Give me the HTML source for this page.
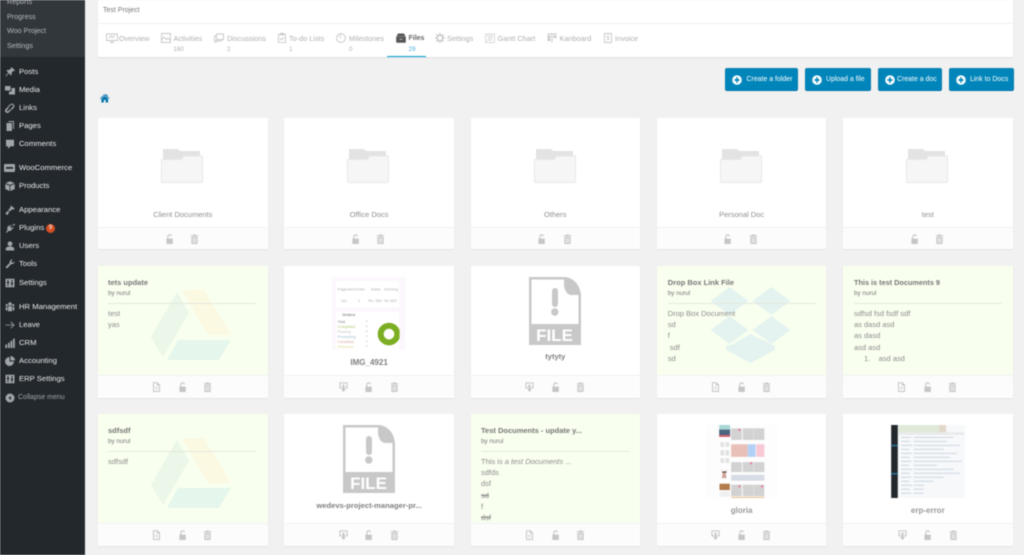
<!DOCTYPE html>
<html><head><meta charset="utf-8"><title>Test Project - Files</title>
<style>
html,body{margin:0;padding:0;background:#f1f1f1;}
body{width:1024px;height:555px;overflow:hidden;position:relative;font-family:"Liberation Sans",sans-serif;}
#w{position:absolute;left:0;top:0;width:1024px;height:555px;overflow:hidden;filter:blur(.4px);}
.t{position:absolute;line-height:12px;white-space:nowrap;}
#side{position:absolute;left:0;top:0;width:85px;height:555px;background:#23282d;}
#sub{position:absolute;left:0;top:0;width:85px;height:57px;background:#32373c;}
#side .m{font-size:7.7px;color:#e8e8e8;left:19px;}
#side .s{font-size:7.200px;color:#b4b9be;left:7px;}
#side svg{position:absolute;left:5px;width:10px;height:10px;fill:#a0a5aa;}
#head{position:absolute;left:98px;top:0;width:915px;height:57px;background:#fff;box-shadow:0 1px 1px rgba(0,0,0,.08);}
#head .l{position:absolute;left:0;top:23px;width:915px;height:1px;background:#f0f0f0;}
.tab{font-size:7.300px;color:#b0b0b0;top:32.500px;}
.cnt{font-size:6.200px;color:#b0b0b0;top:43.500px;}
.ti{position:absolute;top:33px;width:10px;height:10px;fill:none;stroke:#c6c6c6;stroke-width:.9;}
.b{position:absolute;top:68px;height:21px;background:#0085ba;border:1px solid #0a7fb0;border-bottom-color:#0073aa;border-radius:2px;color:#fff;font-size:6.950px;line-height:21px;white-space:nowrap;box-sizing:content-box;}
.b svg{position:absolute;left:6px;top:5.500px;width:10px;height:10px;}
.b span{position:absolute;top:0;}
.c{position:absolute;width:169.600px;height:131.700px;background:#fff;box-shadow:0 1px 1px rgba(0,0,0,.06);overflow:hidden;}
.d{background:#f9ffef;}
.f{position:absolute;left:0;bottom:0;width:100%;height:22.400px;background:#fcfcfc;border-top:1px solid #f2f2f2;box-sizing:border-box;}
.i{position:absolute;top:116px;width:9px;height:10px;fill:#c6c6c6;}
.n{position:absolute;left:0;width:100%;text-align:center;line-height:12px;white-space:nowrap;font-size:7.500px;color:#8f8f8f;}
.nb{font-weight:bold;color:#808080;}
.h{font-size:7.500px;font-weight:bold;color:#777;top:11px;}
.by{font-size:6.300px;color:#777;top:22px;}
.r{position:absolute;top:37px;height:1px;background:#e4e8de;width:148px;}
.p{font-size:7.500px;color:#8c8c8c;}
.bg{position:absolute;left:0;top:0;width:170px;height:110px;}
</style></head><body>
<svg width="0" height="0" style="position:absolute">
<defs>
<symbol id="lock" viewBox="0 0 9 10"><path d="M1.400 4.600h6.400V10H1.400zM2.300 4.600V2.800C2.300 1.200 3.300.3 4.600.3 5.800.3 6.700 1 6.900 2.300L5.800 2.500C5.700 1.800 5.300 1.400 4.600 1.400 3.900 1.400 3.400 1.900 3.400 2.800V4.600z"/></symbol>
<symbol id="trash" viewBox="0 0 9 10"><path d="M.8 1.300h2.400V.4h2.600v.9h2.400v1.100H.8zM1.400 3h6.200v7H1.400zM2.800 4v5h.7V4zM4.200 4v5h.7V4zM5.600 4v5h.7V4z" fill-rule="evenodd"/></symbol>
<symbol id="doc" viewBox="0 0 9 10"><path d="M1 .2h4.500L8 2.800V10H1zM2 1.200V9h5V3.500H4.800V1.200zM3 5h3v.7H3zM3 6.700h3v.7H3z" fill-rule="evenodd"/></symbol>
<symbol id="dl" viewBox="0 0 9 10"><path d="M.4.400h8.200v6H6.400V5H7.600V1.400H1.400V5h1.200v1.400H.4zM3.400 2.800h2.200V7h1.300L4.500 10 2.100 7h1.300z" fill-rule="evenodd"/></symbol>
<symbol id="plus" viewBox="0 0 10 10"><circle cx="5" cy="5" r="4.800" fill="#fff"/><path d="M4.200 2.300h1.600v1.900h1.900v1.600H5.800v1.900H4.200V5.800H2.300V4.200h1.900z" fill="#0085ba"/></symbol>
<symbol id="file" viewBox="0 0 52 68"><path fill="#c8c8c8" fill-rule="evenodd" d="M0 0H36C45 1 51 8 52 18V68H0zM2.500 2.500V47H49.500V18H43C38 18 36 14 35 9V2.500z"/><rect x="23" y="11" width="6" height="19" rx="3" fill="#c8c8c8"/><circle cx="25.800" cy="35" r="3.700" fill="#c8c8c8"/><text x="25.500" y="64" text-anchor="middle" font-family="Liberation Sans" font-weight="bold" font-size="17" fill="#fff">FILE</text></symbol>
<symbol id="folder" viewBox="0 0 42 34"><path d="M2 0h15l2 2h20v10H2z" fill="#e3e3e3"/><path d="M.5 10.500H20l2.500-3.500H41a.5.500 0 0 1 .5.500v25a1 1 0 0 1-1 1H1.500a1 1 0 0 1-1-1z" fill="#f6f6f6" stroke="#e8e8e8"/></symbol>
</defs>
</svg>
<div id="w">

<div id="side"><div id="sub"></div>
<div class="t s" style="top:-4px">Reports</div>
<div class="t s" style="top:11px">Progress</div>
<div class="t s" style="top:25px">Woo Project</div>
<div class="t s" style="top:39.500px">Settings</div>
<svg viewBox="0 0 10 10" style="top:66.500px"><path d="M6.500 0l3.500 3.500-1 .7-.8-.3L6.500 6l.3 1.600-.8.8-2-2.200L1 9.500l-.6-.2L3.300 5.500 1.500 3.700l.8-.9 1.600.4L6 1.300z"/></svg>
<div class="t m" style="top:65.500px">Posts</div>
<svg viewBox="0 0 10 10" style="top:84.500px"><path d="M0 1h5.500v4.500H0zM6.500 3H10v6.500H4V6.500h2.500z"/></svg>
<div class="t m" style="top:83.500px">Media</div>
<svg viewBox="0 0 10 10" style="top:102.500px"><path d="M6.500.5a3 3 0 0 1 3 3L7 7 5.800 5.800 8 3.500a1.400 1.400 0 0 0-1.900-1.700L3.800 4 3 3zM3 3.700L4 4.800 1.800 7.200a1 1 0 0 0 1.200 1.200l2.200-2.300 1 1L3.500 9.800A2.500 2.500 0 0 1 .2 6.500z"/></svg>
<div class="t m" style="top:101.500px">Links</div>
<svg viewBox="0 0 10 10" style="top:121px"><path d="M3.500 0H9v8H8V1H3.500zM1.500 2H7v8H1.500z"/></svg>
<div class="t m" style="top:120px">Pages</div>
<svg viewBox="0 0 10 10" style="top:139px"><path d="M1 .8h8v6.400H5.500L3 9.800V7.200H1z"/></svg>
<div class="t m" style="top:138px">Comments</div>
<svg viewBox="0 0 11 10" style="top:163px;width:11px;left:4px"><rect y="1" width="11" height="8" rx="1"/><path d="M2 4h7v1.800H2z" fill="#23282d"/></svg>
<div class="t m" style="top:162px">WooCommerce</div>
<svg viewBox="0 0 10 10" style="top:181px"><path d="M5 .3l4.500 1.800L5 3.900.5 2.100zM.3 3l4.300 1.700V10L.3 8zM9.700 3L5.400 4.700V10l4.300-2z"/></svg>
<div class="t m" style="top:180px">Products</div>
<svg viewBox="0 0 10 10" style="top:205px"><path d="M5.500.3l4.200 3.200-1 1.200-1.400-.6L4.800 6.500 3.300 5l2.300-2.600zM4.200 6.800l-1.500 2.900-1.200-.1L.3 8.400 3 5.700z"/></svg>
<div class="t m" style="top:204px">Appearance</div>
<svg viewBox="0 0 10 10" style="top:223px"><path d="M3 2l1.600 1.500L6 1.800l.8.6L5.300 4l1.300 1.300L8 3.800l.7.700L7 6.300c-.5 1.500-2 2-3.200 1.500L2 9.800 1 9.300l1.600-2.300C1.800 6 2 4.500 3 4zM8 1h1.800v1.500H8z"/></svg>
<div class="t m" style="top:222px">Plugins</div>
<div style="position:absolute;left:46px;top:223.500px;width:9px;height:9px;border-radius:50%;background:#d54e21;color:#fff;font-size:6px;line-height:9px;text-align:center">9</div>
<svg viewBox="0 0 10 10" style="top:241px"><circle cx="5" cy="2.800" r="2.400"/><path d="M.8 9.500V7.500C1 6 3 5.500 5 5.500S9 6 9.200 7.500v2z"/></svg>
<div class="t m" style="top:240px">Users</div>
<svg viewBox="0 0 10 10" style="top:259px"><path d="M9.700 2.300C9.800 4 8 5.600 6.200 5L2 9.500.5 8.300 4.800 3.800C4.300 2 6 .2 7.800.3L6.300 2l.5 1.300 1.300.4z"/></svg>
<div class="t m" style="top:258px">Tools</div>
<svg viewBox="0 0 10 10" style="top:277.500px"><path fill-rule="evenodd" d="M.5.800h9v8.400h-9zM2.500 2v2H1.700v1h.8v3h1V5h.8V4h-.8V2zM6.500 2v3h-.8v1h.8v2h1V6h.8V5h-.8V2z"/></svg>
<div class="t m" style="top:276.500px">Settings</div>
<svg viewBox="0 0 10 10" style="top:301.500px"><circle cx="5" cy="2" r="1.700"/><circle cx="1.800" cy="3.200" r="1.200"/><circle cx="8.200" cy="3.200" r="1.200"/><path d="M3 4.300h4v5H3zM.7 5h1.700v3.500H.7zM7.600 5h1.700v3.500H7.600z"/></svg>
<div class="t m" style="top:300.500px">HR Management</div>
<svg viewBox="0 0 10 10" style="top:320px;fill:none;stroke:#a0a5aa;stroke-width:.8"><path d="M.5 5h8.500M5.800 1.800L9 5 5.800 8.200"/></svg>
<div class="t m" style="top:319px">Leave</div>
<svg viewBox="0 0 10 10" style="top:338px"><path d="M.3 6.500h1.800V10H.3zM3 4.800h1.800V10H3zM5.500 2.700h1.800V10H5.500zM8 .6h1.800V10H8z"/></svg>
<div class="t m" style="top:337px">CRM</div>
<svg viewBox="0 0 10 10" style="top:356px"><path d="M4.500 1v4.500H9A4.500 4.500 0 1 1 4.500 1zM5.500 0A4.500 4.500 0 0 1 10 4.500H5.500z"/></svg>
<div class="t m" style="top:355px">Accounting</div>
<svg viewBox="0 0 10 10" style="top:374px"><path fill-rule="evenodd" d="M.5.800h9v8.400h-9zM2.500 2v2H1.700v1h.8v3h1V5h.8V4h-.8V2zM6.500 2v3h-.8v1h.8v2h1V6h.8V5h-.8V2z"/></svg>
<div class="t m" style="top:373px">ERP Settings</div>
<svg viewBox="0 0 10 10" style="top:392.500px"><path fill-rule="evenodd" d="M5 .5a4.500 4.500 0 1 1 0 9 4.500 4.500 0 0 1 0-9zM6 3L3.500 5 6 7z"/></svg>
<div class="t" style="left:18px;top:391.500px;font-size:7px;color:#a0a5aa">Collapse menu</div>
</div>

<div id="head">
<div class="t" style="left:5px;top:5px;font-size:7px;color:#777">Test Project</div>
<div class="l"></div>
<div style="position:absolute;left:289px;top:55.500px;width:39px;height:1.500px;background:#00a0d2"></div>
</div>

<svg class="ti" viewBox="0 0 12 10" style="left:106px;width:12px"><path d="M.5 1h11v6.500H.5zM4 9.500h4M6 7.500v2M3 5l2-2 1.500 1.500L9 2.500"/></svg>
<div class="t tab" style="left:119px">Overview</div>
<svg class="ti" viewBox="0 0 10 10" style="left:161px"><path d="M.5.500h9v9h-9zM.5 7L3 4l2.500 2.500L7 5l2.500 2.500"/></svg>
<div class="t tab" style="left:173.500px">Activities</div><div class="t cnt" style="left:173.500px">160</div>
<svg class="ti" viewBox="0 0 10 10" style="left:214px"><path d="M2.500 1h7v5.500h-2v1.500L6 6.500H2.500zM2 3H.5v5H1.500V9.500L3 8h3"/></svg>
<div class="t tab" style="left:227px">Discussions</div><div class="t cnt" style="left:227px">2</div>
<svg class="ti" viewBox="0 0 10 10" style="left:276.500px"><path d="M1.500 1.200h7v8.500h-7zM3.500.3h3v1.500h-3zM3 5.500l1.500 1.500L7 4"/></svg>
<div class="t tab" style="left:289px">To-do Lists</div><div class="t cnt" style="left:289px">1</div>
<svg class="ti" viewBox="0 0 10 10" style="left:336px"><circle cx="5" cy="5" r="4.400"/><path d="M5 5L3 2.500M5 .6v1.500"/></svg>
<div class="t tab" style="left:349px">Milestones</div><div class="t cnt" style="left:349px">0</div>
<svg viewBox="0 0 10 10" style="position:absolute;left:396px;top:33px;width:10px;height:10px"><path d="M2 .5h6L9.800 4v5c0 .4-.3.700-.7.700H.9c-.4 0-.7-.3-.7-.7V4z" fill="#555"/><path d="M1 3.500h8" stroke="#aaa" stroke-width=".5"/><path d="M3.500 6.300h3" stroke="#ddd" stroke-width=".7"/></svg>
<div class="t tab" style="left:408.500px;top:33px;color:#666;font-weight:bold;font-size:7px">Files</div><div class="t cnt" style="left:408.500px;color:#4aa9d8">29</div>
<svg class="ti" viewBox="0 0 10 10" style="left:434.500px;stroke-width:1.300"><circle cx="5" cy="5" r="2.800"/><path d="M5 0v1.800M5 8.200V10M0 5h1.800M8.200 5H10M1.500 1.500l1.300 1.300M7.200 7.200l1.300 1.300M8.500 1.500L7.200 2.800M2.800 7.200L1.500 8.500"/></svg>
<div class="t tab" style="left:447px">Settings</div>
<svg class="ti" viewBox="0 0 10 10" style="left:485px"><path d="M.5 1h9M.5 9.500h9M2 3h6M3 5h5M2 7h5M.5 1v8.500M9.500 1v8.500" stroke-dasharray="1.200 .5"/></svg>
<div class="t tab" style="left:497.500px">Gantt Chart</div>
<svg class="ti" viewBox="0 0 10 10" style="left:547px"><path d="M.3 1h9.400M5 1v8.500"/><path d="M1 3h2v1.500H1zM1 6h2v1.500H1zM7 3h2v1.500H7z" fill="#c6c6c6"/></svg>
<div class="t tab" style="left:559.500px">Kanboard</div>
<svg class="ti" viewBox="0 0 8 10" style="left:603.500px;width:8px"><path d="M.5.500h7v9h-7z"/><path d="M5 3.200C4 2.500 3 3 3 3.800S5 4.800 5 5.800 3.900 7 3 6.500M4 2.300v5.200" stroke-width=".6"/></svg>
<div class="t tab" style="left:615px">Invoice</div>

<div class="b" style="left:725px;width:71px"><svg><use href="#plus"/></svg><span style="left:20.500px">Create a folder</span></div>
<div class="b" style="left:804.500px;width:64.500px"><svg><use href="#plus"/></svg><span style="left:20.500px">Upload a file</span></div>
<div class="b" style="left:877.500px;width:62px"><svg><use href="#plus"/></svg><span style="left:18.500px">Create a doc</span></div>
<div class="b" style="left:948.500px;width:63.500px"><svg><use href="#plus"/></svg><span style="left:20.500px">Link to Docs</span></div>

<svg viewBox="0 0 10 9" style="position:absolute;left:100px;top:94px;width:9.500px;height:8.500px"><path fill="#0073aa" d="M5 0l1.700 1.500V.6h1.200v2L10 4.500l-.6.600L5 1.200.6 5.100 0 4.500zM1.500 5L5 2l3.500 3v4H6V6.200H4V9H1.500z"/></svg>

<!-- Row 1 -->
<div class="c" style="left:98px;top:118px;height:131px"><svg style="position:absolute;left:63px;top:31px;width:42px;height:34px"><use href="#folder"/></svg><div class="n" style="top:90.500px">Client Documents</div><div class="f"></div><svg class="i" style="left:66.500px"><use href="#lock"/></svg><svg class="i" style="left:92px"><use href="#trash"/></svg></div>
<div class="c" style="left:284.300px;top:118px;height:131px"><svg style="position:absolute;left:63px;top:31px;width:42px;height:34px"><use href="#folder"/></svg><div class="n" style="top:90.500px">Office Docs</div><div class="f"></div><svg class="i" style="left:66.500px"><use href="#lock"/></svg><svg class="i" style="left:92px"><use href="#trash"/></svg></div>
<div class="c" style="left:470.500px;top:118px;height:131px"><svg style="position:absolute;left:63px;top:31px;width:42px;height:34px"><use href="#folder"/></svg><div class="n" style="top:90.500px">Others</div><div class="f"></div><svg class="i" style="left:66.500px"><use href="#lock"/></svg><svg class="i" style="left:92px"><use href="#trash"/></svg></div>
<div class="c" style="left:656.800px;top:118px;height:131px"><svg style="position:absolute;left:63px;top:31px;width:42px;height:34px"><use href="#folder"/></svg><div class="n" style="top:90.500px">Personal Doc</div><div class="f"></div><svg class="i" style="left:66.500px"><use href="#lock"/></svg><svg class="i" style="left:92px"><use href="#trash"/></svg></div>
<div class="c" style="left:843px;top:118px;height:131px"><svg style="position:absolute;left:63px;top:31px;width:42px;height:34px"><use href="#folder"/></svg><div class="n" style="top:90.500px">test</div><div class="f"></div><svg class="i" style="left:66.500px"><use href="#lock"/></svg><svg class="i" style="left:92px"><use href="#trash"/></svg></div>

<!-- Row 2 -->
<div class="c d" style="left:98px;top:266px">
<svg class="bg" viewBox="0 0 170 110"><path d="M53 71L79 26 91 47 65 91z" fill="#ebf7e8"/><path d="M84 24h22l27 45h-23z" fill="#fbf9e2"/><path d="M80 74h53l-12 20H69z" fill="#e5f6ec"/></svg>
<div class="t h" style="left:10px">tets update</div><div class="t by" style="left:10px">by nurul</div><div class="r" style="left:10px"></div>
<div class="t p" style="left:10px;top:42px">test</div><div class="t p" style="left:10px;top:53px">yas</div>
<div class="f"></div><svg class="i" style="left:54px"><use href="#doc"/></svg><svg class="i" style="left:80px"><use href="#lock"/></svg><svg class="i" style="left:105px"><use href="#trash"/></svg></div>

<div class="c" style="left:284.300px;top:266px">
<svg style="position:absolute;left:47.500px;top:11px;width:73.500px;height:73px" viewBox="0 0 220 220" font-family="Liberation Sans" font-size="15" fill="#b5b2b6"><rect width="220" height="220" fill="#fbf7fc"/><rect x="10" y="12" width="192" height="80" fill="#fff"/><rect x="10" y="105" width="192" height="115" fill="#fff"/>
<text x="16" y="41" font-size="12">Pageview</text><text x="68" y="41" font-size="12">Order</text><text x="116" y="41" font-size="12">Sales</text><text x="157" y="41" font-size="12">Earning</text><text x="26" y="76" font-size="12">111</text><text x="78" y="76" font-size="12">1</text><text x="109" y="76" font-size="12">Rs. 650</text><text x="157" y="76" font-size="12">₨ 650</text>
<text x="30" y="118" fill="#8a878a" font-weight="bold" font-size="12">Orders</text>
<text x="16" y="139" font-size="11" fill="#888">Total</text><text x="16" y="154" font-size="11" fill="#b0c870">Completed</text><text x="16" y="169" font-size="11" fill="#c4c4c4">Pending</text><text x="16" y="184" font-size="11" fill="#9fbdd0">Processing</text><text x="16" y="199" font-size="11" fill="#d8a5a5">Cancelled</text><text x="16" y="214" font-size="11" fill="#e6dc9a">Refunded</text>
<g fill="#ccc"><rect x="102" y="131" width="4" height="4"/><rect x="102" y="146" width="4" height="4"/><rect x="102" y="161" width="4" height="4"/><rect x="102" y="176" width="4" height="4"/><rect x="102" y="191" width="4" height="4"/><rect x="102" y="206" width="4" height="4"/></g>
<svg x="120" y="120" width="83" height="100"><circle cx="51" cy="52" r="25" fill="none" stroke="#7cae23" stroke-width="18"/></svg></svg>
<div class="n nb" style="top:90.500px;font-size:8px">IMG_4921</div>
<div class="f"></div><svg class="i" style="left:54.500px"><use href="#dl"/></svg><svg class="i" style="left:80px"><use href="#lock"/></svg><svg class="i" style="left:105.500px"><use href="#trash"/></svg></div>

<div class="c" style="left:470.500px;top:266px">
<svg style="position:absolute;left:58.500px;top:11px;width:52px;height:68px"><use href="#file"/></svg>
<div class="n nb" style="top:85px;font-size:7.500px">tytyty</div>
<div class="f"></div><svg class="i" style="left:54.500px"><use href="#dl"/></svg><svg class="i" style="left:80px"><use href="#lock"/></svg><svg class="i" style="left:105.500px"><use href="#trash"/></svg></div>

<div class="c d" style="left:656.800px;top:266px">
<svg class="bg" viewBox="0 0 170 110"><g fill="#e4f3ef"><path d="M72.500 21l19 14-19 14-19-14zM114.500 21l19 14-19 14-19-14zM72.500 50l19 14-19 14-19-14zM114.500 50l19 14-19 14-19-14zM93.500 68l24.500 12v4L93.500 97 69 84v-4l5-1 19.500-11z"/></g></svg>
<div class="t h" style="left:11px">Drop Box Link File</div><div class="t by" style="left:11px">by nurul</div><div class="r" style="left:11px"></div>
<div class="t p" style="left:11px;top:42px">Drop Box Document</div><div class="t p" style="left:11px;top:53px">sd</div><div class="t p" style="left:11px;top:64px">f</div><div class="t p" style="left:13px;top:75.500px">sdf</div><div class="t p" style="left:11px;top:86.500px">sd</div>
<div class="f"></div><svg class="i" style="left:54px"><use href="#doc"/></svg><svg class="i" style="left:80px"><use href="#lock"/></svg><svg class="i" style="left:105px"><use href="#trash"/></svg></div>

<div class="c d" style="left:843px;top:266px">
<div class="t h" style="left:11px;font-size:7.300px">This is test Documents 9</div><div class="t by" style="left:11px">by nurul</div><div class="r" style="left:11px"></div>
<div class="t p" style="left:11px;top:42px">sdfsd fsd fsdf sdf</div><div class="t p" style="left:11px;top:53px">as dasd asd</div><div class="t p" style="left:11px;top:64px">as dasd</div><div class="t p" style="left:11px;top:75.500px">asd asd</div><div class="t p" style="left:21px;top:86.500px">1.&nbsp;&nbsp;&nbsp;&nbsp;asd asd</div>
<div class="f"></div><svg class="i" style="left:54px"><use href="#doc"/></svg><svg class="i" style="left:80px"><use href="#lock"/></svg><svg class="i" style="left:105px"><use href="#trash"/></svg></div>

<!-- Row 3 -->
<div class="c d" style="left:98px;top:414px">
<svg class="bg" viewBox="0 0 170 110"><path d="M53 71L79 26 91 47 65 91z" fill="#ebf7e8"/><path d="M84 24h22l27 45h-23z" fill="#fbf9e2"/><path d="M80 74h53l-12 20H69z" fill="#e5f6ec"/></svg>
<div class="t h" style="left:10px">sdfsdf</div><div class="t by" style="left:10px">by nurul</div><div class="r" style="left:10px"></div>
<div class="t p" style="left:10px;top:42px">sdfsdf</div>
<div class="f"></div><svg class="i" style="left:54px"><use href="#doc"/></svg><svg class="i" style="left:80px"><use href="#lock"/></svg><svg class="i" style="left:105px"><use href="#trash"/></svg></div>

<div class="c" style="left:284.300px;top:414px">
<svg style="position:absolute;left:58.500px;top:11px;width:52px;height:68px"><use href="#file"/></svg>
<div class="n nb" style="top:85.500px;font-size:7.600px">wedevs-project-manager-pr...</div>
<div class="f"></div><svg class="i" style="left:54.500px"><use href="#dl"/></svg><svg class="i" style="left:80px"><use href="#lock"/></svg><svg class="i" style="left:105.500px"><use href="#trash"/></svg></div>

<div class="c d" style="left:470.500px;top:414px">
<div class="t h" style="left:10.500px">Test Documents - update y...</div><div class="t by" style="left:10.500px">by nurul</div><div class="r" style="left:10.500px"></div>
<div class="t p" style="left:10.500px;top:42px">This is <i>a test Documents</i> ...</div><div class="t p" style="left:10.500px;top:53px">sdfds</div><div class="t p" style="left:10.500px;top:64px">dsf</div><div class="t p" style="left:10.500px;top:75.500px"><s>sd</s></div><div class="t p" style="left:10.500px;top:86.500px">f</div><div class="t p" style="left:10.500px;top:97.500px"><s>dsf</s></div>
<div class="f"></div><svg class="i" style="left:54px"><use href="#doc"/></svg><svg class="i" style="left:80px"><use href="#lock"/></svg><svg class="i" style="left:105px"><use href="#trash"/></svg></div>

<div class="c" style="left:656.800px;top:414px">
<svg style="position:absolute;left:48px;top:11px;width:73.500px;height:73px" viewBox="0 0 220 220"><rect width="220" height="220" fill="#fdfdfd"/>
<rect x="42" width="33" height="18" fill="#a9d5d5"/><rect x="42" y="14" width="33" height="18" fill="#4a6680"/><rect x="42" y="30" width="33" height="6" fill="#d5606e"/>
<g fill="#e2e2e2"><rect x="46" y="52" width="11" height="14"/><rect x="61" y="52" width="11" height="14"/><rect x="46" y="76" width="11" height="16"/><rect x="61" y="76" width="11" height="16"/><rect x="46" y="100" width="11" height="14"/><rect x="61" y="100" width="11" height="14"/></g>
<path d="M48 132l5 10h8l5-10-4 16 2 12h-14l2-12z" fill="#d0a496"/><rect x="52" y="140" width="12" height="3" fill="#333"/>
<rect x="43" y="177" width="31" height="19" fill="#b37a4c"/><rect x="44" y="200" width="30" height="16" fill="#f0f0f0"/>
<g fill="#d2d2d2"><rect x="78" y="10" width="32" height="35"/><rect x="113" y="10" width="32" height="35"/><rect x="146" y="10" width="32" height="35"/><rect x="78" y="112" width="32" height="30"/><rect x="113" y="112" width="32" height="30"/><rect x="146" y="112" width="32" height="30"/><rect x="78" y="180" width="32" height="35"/><rect x="113" y="180" width="32" height="35"/><rect x="146" y="180" width="32" height="35"/></g>
<rect x="78" y="58" width="50" height="38" fill="#e8c0b8"/><rect x="128" y="58" width="24" height="38" fill="#b3d0f7"/><rect x="154" y="58" width="24" height="38" fill="#f8c8d5"/>
<rect x="78" y="150" width="100" height="18" fill="#d8dce4"/><rect x="78" y="217" width="100" height="3" fill="#eec08a"/>
<g fill="#ec7a9a"><rect x="100" y="12" width="6" height="6"/><rect x="135" y="112" width="6" height="6"/><rect x="100" y="182" width="6" height="6"/><rect x="168" y="182" width="6" height="6"/></g></svg>
<div class="n nb" style="top:91px;font-size:8px;color:#999">gloria</div>
<div class="f"></div><svg class="i" style="left:54.500px"><use href="#dl"/></svg><svg class="i" style="left:80px"><use href="#lock"/></svg><svg class="i" style="left:105.500px"><use href="#trash"/></svg></div>

<div class="c" style="left:843px;top:414px">
<svg style="position:absolute;left:48px;top:11px;width:74px;height:73px" viewBox="0 0 222 220"><rect width="222" height="220" fill="#f6f8fa"/><rect width="20" height="220" fill="#23282d"/><rect y="60" width="20" height="4" fill="#2a7ea8"/><rect y="145" width="20" height="4" fill="#2a7ea8"/>
<rect x="22" width="143" height="22" fill="#dfe9d8"/><rect x="145" width="20" height="22" fill="#e4d8ca"/><rect x="22" y="22" width="198" height="8" fill="#e8eaec"/>
<g fill="#cdd7e0"><rect x="30" y="36" width="30" height="3"/><rect x="68" y="36" width="120" height="3"/><rect x="30" y="48" width="26" height="3"/><rect x="68" y="48" width="100" height="3"/><rect x="30" y="60" width="34" height="3"/><rect x="68" y="60" width="140" height="3"/><rect x="30" y="72" width="24" height="3"/><rect x="68" y="72" width="90" height="3"/><rect x="30" y="84" width="32" height="3"/><rect x="68" y="84" width="130" height="3"/><rect x="30" y="96" width="26" height="3"/><rect x="68" y="96" width="110" height="3"/><rect x="30" y="108" width="30" height="3"/><rect x="68" y="108" width="145" height="3"/><rect x="30" y="120" width="24" height="3"/><rect x="68" y="120" width="70" height="3"/><rect x="30" y="132" width="34" height="3"/><rect x="68" y="132" width="120" height="3"/><rect x="30" y="144" width="26" height="3"/><rect x="68" y="144" width="140" height="3"/><rect x="30" y="156" width="30" height="3"/><rect x="68" y="156" width="90" height="3"/><rect x="30" y="168" width="24" height="3"/><rect x="68" y="168" width="60" height="3"/><rect x="30" y="180" width="34" height="3"/><rect x="68" y="180" width="30" height="3"/><rect x="30" y="192" width="26" height="3"/><rect x="68" y="192" width="30" height="3"/><rect x="30" y="204" width="30" height="3"/><rect x="68" y="204" width="30" height="3"/></g></svg>
<div class="n nb" style="top:91px;font-size:8px;color:#999">erp-error</div>
<div class="f"></div><svg class="i" style="left:54.500px"><use href="#dl"/></svg><svg class="i" style="left:80px"><use href="#lock"/></svg><svg class="i" style="left:105.500px"><use href="#trash"/></svg></div>

</div>
</body></html>
